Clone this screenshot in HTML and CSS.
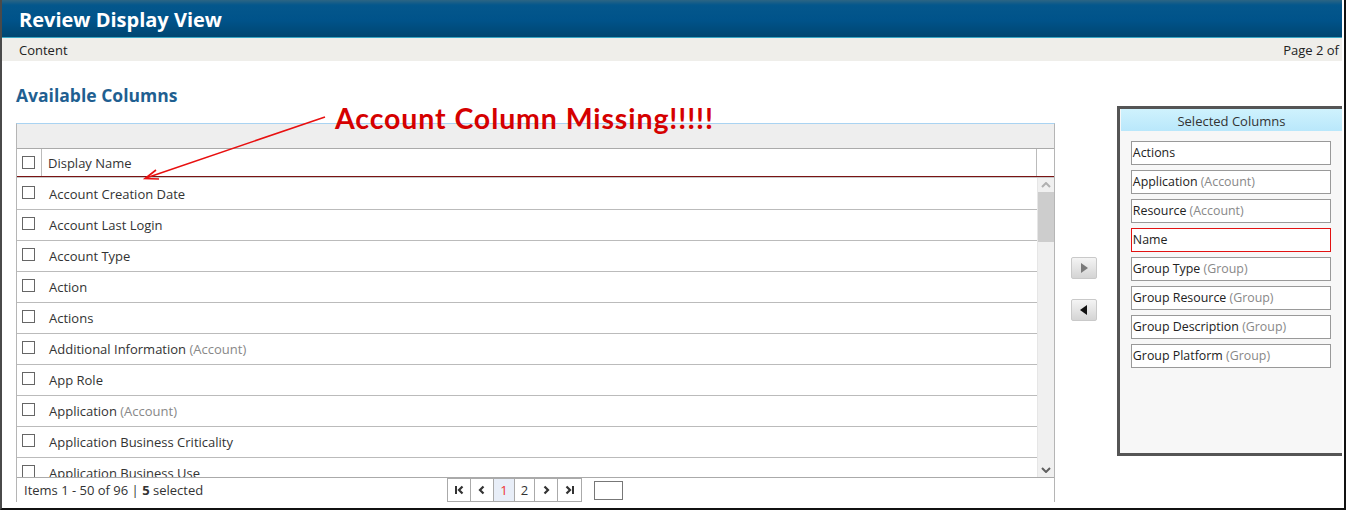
FILE: index.html
```html
<!DOCTYPE html>
<html>
<head>
<meta charset="utf-8">
<link rel="stylesheet" href="styles.css">
</head>
<body>
<div class="frame">
  <div class="titlebar">Review Display View</div>
  <div class="subbar"><span>Content</span><span>Page 2 of</span></div>
  <div class="main">
    <div class="left">
      <h2 class="title">Available Columns</h2>
      <div class="grid">
        <div class="groupbar"></div>
        <div class="ghead">
          <div class="cbcell"><span class="cb"></span></div>
          <div class="namecell">Display Name</div>
          <div class="spacer"></div>
        </div>
        <div class="gbody">
          <div class="rows">
            <div class="row"><span class="cb"></span><span class="txt">Account Creation Date</span></div>
            <div class="row"><span class="cb"></span><span class="txt">Account Last Login</span></div>
            <div class="row"><span class="cb"></span><span class="txt">Account Type</span></div>
            <div class="row"><span class="cb"></span><span class="txt">Action</span></div>
            <div class="row"><span class="cb"></span><span class="txt">Actions</span></div>
            <div class="row"><span class="cb"></span><span class="txt">Additional Information <span class="muted">(Account)</span></span></div>
            <div class="row"><span class="cb"></span><span class="txt">App Role</span></div>
            <div class="row"><span class="cb"></span><span class="txt">Application <span class="muted">(Account)</span></span></div>
            <div class="row"><span class="cb"></span><span class="txt">Application Business Criticality</span></div>
            <div class="row"><span class="cb"></span><span class="txt">Application Business Use</span></div>
          </div>
          <div class="scrollbar">
            <div class="sarrow"><svg width="10" height="6" viewBox="0 0 10 6"><path d="M1 5 L5 1 L9 5" fill="none" stroke="#b0b0b0" stroke-width="2"/></svg></div>
            <div class="thumb"></div>
            <div class="strack"></div>
            <div class="sarrow"><svg width="10" height="6" viewBox="0 0 10 6"><path d="M1 1 L5 5 L9 1" fill="none" stroke="#606060" stroke-width="2"/></svg></div>
          </div>
        </div>
        <div class="gfoot">
          <div class="items">Items 1 - 50 of 96 | <b>5</b> selected</div>
          <div class="pager">
            <span class="pb w23"><svg width="10" height="10" viewBox="0 0 10 10"><path d="M1 1 H3 V9 H1 Z" fill="#333"/><path d="M8.5 1.5 L5 5 L8.5 8.5" fill="none" stroke="#333" stroke-width="2.2"/></svg></span>
            <span class="pb w23"><svg width="8" height="10" viewBox="0 0 8 10"><path d="M5.5 1.5 L2 5 L5.5 8.5" fill="none" stroke="#333" stroke-width="2.2"/></svg></span>
            <span class="pb w22 cur">1</span>
            <span class="pb w21">2</span>
            <span class="pb w23"><svg width="8" height="10" viewBox="0 0 8 10"><path d="M2.5 1.5 L6 5 L2.5 8.5" fill="none" stroke="#333" stroke-width="2.2"/></svg></span>
            <span class="pb w24"><svg width="10" height="10" viewBox="0 0 10 10"><path d="M1.5 1.5 L5 5 L1.5 8.5" fill="none" stroke="#333" stroke-width="2.2"/><path d="M7 1 H9 V9 H7 Z" fill="#333"/></svg></span>
          </div>
          <div class="pinput"></div>
        </div>
      </div>
    </div>
    <div class="mid">
      <div class="abtn"><svg width="8" height="10" viewBox="0 0 8 10"><path d="M1 0 L8 5 L1 10 Z" fill="#7a7a7a"/></svg></div>
      <div class="abtn"><svg width="8" height="10" viewBox="0 0 8 10"><path d="M7 0 L0 5 L7 10 Z" fill="#111"/></svg></div>
    </div>
    <div class="right">
      <div class="shead">Selected Columns</div>
      <div class="slist">
        <div class="sitem">Actions</div>
        <div class="sitem">Application <span class="muted">(Account)</span></div>
        <div class="sitem">Resource <span class="muted">(Account)</span></div>
        <div class="sitem bad">Name</div>
        <div class="sitem">Group Type <span class="muted">(Group)</span></div>
        <div class="sitem">Group Resource <span class="muted">(Group)</span></div>
        <div class="sitem">Group Description <span class="muted">(Group)</span></div>
        <div class="sitem">Group Platform <span class="muted">(Group)</span></div>
      </div>
    </div>
  </div>
  <div class="note">Account Column Missing!!!!!</div>
  <svg class="arrow" width="200" height="80" viewBox="0 0 200 80"><path d="M185 3 L6 64" stroke="#e81010" stroke-width="1.6" fill="none"/><path d="M16 56 L5 64.5 L19 65" stroke="#e81010" stroke-width="1.6" fill="none"/></svg>
</div>
</body>
</html>
```
FILE: styles.css
```css
* { box-sizing: border-box; }
html, body { margin: 0; padding: 0; background: #fff; }
body { font-family: "Open Sans", "Liberation Sans", sans-serif; font-size: 13px; color: #333; }
.frame {
  position: relative;
  width: 1346px; height: 510px;
  border-left: 2px solid #4a4a4a;
  border-right: 2px solid #111;
  border-bottom: 2px solid #111;
  padding-right: 2px;
  overflow: hidden;
}
.titlebar {
  height: 38px;
  background: linear-gradient(#2c6584 0, #04578c 5px, #00538a 20px, #004671 37px);
  border-bottom: 1px solid #3aa7c4;
  color: #fff;
  font-weight: bold;
  font-size: 20px;
  line-height: 40px;
  padding-left: 17px;
}
.subbar {
  height: 23px;
  background: #efeeea;
  display: flex;
  justify-content: space-between;
  align-items: center;
  padding: 0 3px 0 17px;
  color: #222;
}
.main { display: flex; }
.left { width: 1054px; padding-left: 14px; }
.title {
  margin: 22px 0 16px 0;
  font-size: 17.5px;
  line-height: 24px;
  font-weight: bold;
  color: #1f5f91;
}
.grid {
  width: 1039px;
  border-top: 1px solid #a9d3f2;
  border-left: 1px solid #b5b5b5;
  border-right: 1px solid #b5b5b5;
}
.groupbar { height: 25px; background: #eeeeee; border-bottom: 1px solid #aaa; }
.ghead { display: flex; height: 28px; border-bottom: 1px solid #7a1414; }
.cbcell { width: 25px; border-right: 1px solid #bbb; display: flex; align-items: center; padding-left: 5px; }
.namecell { flex: 1; border-right: 1px solid #bbb; display: flex; align-items: center; padding-left: 6px; }
.spacer { width: 17px; }
.cb { display: inline-block; width: 13px; height: 13px; border: 1px solid #666; background: #fff; flex: none; }
.gbody { display: flex; height: 301px; border-top: 1px solid #c8c8c8; border-bottom: 1px solid #aaa; overflow: hidden; }
.rows { flex: 1; padding-top: 1px; }
.row { height: 31px; border-bottom: 1px solid #bbb; display: flex; align-items: center; padding-left: 5px; }
.row .cb { margin-top: -4px; }
.row .txt { margin-left: 14px; }
.muted { color: #888; }
.scrollbar { width: 17px; background: #f0f0f0; border-left: 1px solid #e6e6e6; display: flex; flex-direction: column; }
.sarrow { height: 14px; display: flex; align-items: center; justify-content: center; }
.thumb { height: 50px; background: #cdcdcd; }
.strack { flex: 1; }
.gfoot { display: flex; align-items: flex-start; height: 24px; margin-left: -1px; }
.items { width: 432px; flex: none; padding-left: 8px; line-height: 24px; color: #333; }
.pager { display: flex; flex: none; }
.pb {
  flex: none;
  height: 24px;
  border: 1px solid #aaa; margin-left: -1px;
  display: flex; align-items: center; justify-content: center;
  background: #fff;
}
.w21 { width: 21px; }
.w22 { width: 22px; }
.w23 { width: 24px; }
.w24 { width: 25px; }
.pb.cur { background: #e8eef8; color: #e33; }
.pinput { flex: none; width: 29px; height: 19px; border: 1px solid #777; margin: 3px 0 0 12px; }
.mid { width: 62px; padding: 196px 0 0 16px; display: flex; flex-direction: column; gap: 20px; }
.abtn {
  width: 26px; height: 22px;
  border: 1px solid #c9c9c9; border-radius: 2px;
  background: linear-gradient(#f4f4f4, #d4d4d4);
  display: flex; align-items: center; justify-content: center;
}
.right {
  width: 226px; height: 350px;
  margin-top: 45px;
  border: 3px solid #555; border-right: none;
  background: #f7f7f7;
}
.shead {
  height: 22px; margin-left: 1px;
  background: linear-gradient(#cff2fd, #b9e7fb);
  text-align: center; line-height: 25px; color: #333;
}
.slist { padding: 10px 0 0 11px; display: flex; flex-direction: column; gap: 5px; }
.sitem {
  width: 200px; height: 24px;
  border: 1px solid #999; background: #fff;
  padding-left: 1px; line-height: 22px; color: #222;
  font-size: 12.4px;
}
.sitem.bad { border-color: #e21212; }
.note {
  position: absolute; left: 333px; top: 98px;
  font-family: Lato, "Open Sans", sans-serif;
  font-weight: bold; font-size: 28.5px; color: #d50000;
  letter-spacing: 0.9px;
  line-height: 40px; white-space: nowrap;
}
.arrow { position: absolute; left: 138px; top: 114px; }
```
